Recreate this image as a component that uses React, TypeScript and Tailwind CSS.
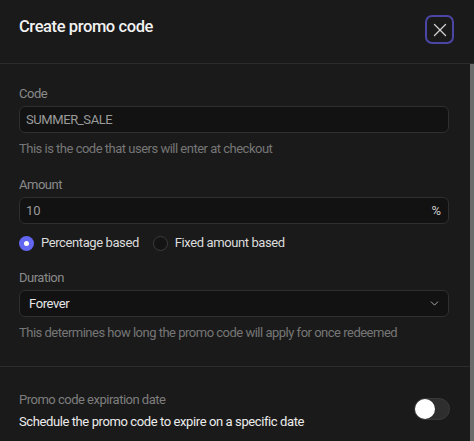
import { X, ChevronDown } from 'lucide-react'

const font = { fontFamily: 'Roboto, "Noto Sans", sans-serif' }

function Field({ label, children, help }: { label: string; children: React.ReactNode; help?: string }) {
  return (
    <div className="flex flex-col">
      <label className="text-[13px] leading-[18px] tracking-[-0.5px] text-[#8a8a8a]">{label}</label>
      <div className="mt-[3px]">{children}</div>
      {help && <p className="mt-[8px] whitespace-nowrap text-[13px] leading-[16px] tracking-[-0.5px] text-[#767676]">{help}</p>}
    </div>
  )
}

function Radio({ checked, label }: { checked?: boolean; label: string }) {
  return (
    <label className="flex items-center gap-[7px]">
      {checked ? (
        <span className="flex h-[15px] w-[15px] items-center justify-center rounded-full bg-[#6366f1]">
          <span className="h-[5px] w-[5px] rounded-full bg-white" />
        </span>
      ) : (
        <span className="h-[15px] w-[15px] rounded-full border border-[#3c3c3c] bg-[#141414]" />
      )}
      <span className="text-[13px] leading-[18px] tracking-[-0.4px] text-[#dcdcdc]">{label}</span>
    </label>
  )
}

export default function App() {
  return (
    <div style={font} className="flex h-[441px] w-[474px] flex-col overflow-hidden bg-[#1a1a1a]">
      {/* Header */}
      <div className="flex h-[64px] shrink-0 items-start justify-between border-b border-[#2c2c2c] pl-[19px] pr-[20px]">
        <h2 className="mt-[16px] text-[16.5px] font-medium leading-[22px] tracking-[-0.4px] text-[#f2f2f2]">Create promo code</h2>
        <button className="mt-[15px] flex h-[29px] w-[29px] items-center justify-center rounded-[7px] border-2 border-[#4b46a6] bg-[#1a1a1a]">
          <X className="h-[22px] w-[22px] text-[#d0d0d0]" strokeWidth={1.4} />
        </button>
      </div>

      <div className="flex min-h-0 flex-1">
        <div className="flex-1">
          {/* Main section */}
          <div className="flex flex-col border-b border-[#2c2c2c] pb-[25px] pl-[19px] pr-[21px] pt-[21px]">
            <Field label="Code" help="This is the code that users will enter at checkout">
              <div className="flex h-[27px] items-center rounded-[6px] border border-[#2f2f2f] bg-[#121212] px-[6px]">
                <span className="text-[13px] tracking-[-0.4px] text-[#9a9a9a]">SUMMER_SALE</span>
              </div>
            </Field>

            <div className="mt-[19px]">
              <Field label="Amount">
                <div className="flex h-[27px] items-center justify-between rounded-[6px] border border-[#2f2f2f] bg-[#121212] pl-[6px] pr-[7px]">
                  <span className="text-[13px] text-[#9a9a9a]">10</span>
                  <span className="text-[13px] text-[#c8c8c8]">%</span>
                </div>
              </Field>
            </div>

            <div className="mt-[10px] flex items-center gap-[14px]">
              <Radio checked label="Percentage based" />
              <Radio label="Fixed amount based" />
            </div>

            <div className="mt-[17px]">
              <Field label="Duration" help="This determines how long the promo code will apply for once redeemed">
                <div className="flex h-[27px] items-center justify-between rounded-[6px] border border-[#2f2f2f] bg-[#121212] pl-[9px] pr-[7px]">
                  <span className="text-[13px] tracking-[-0.4px] text-[#e6e6e6]">Forever</span>
                  <ChevronDown className="h-[13px] w-[13px] text-[#bdbdbd]" strokeWidth={1.6} />
                </div>
              </Field>
            </div>
          </div>

          {/* Expiration */}
          <div className="flex items-start justify-between pl-[19px] pr-[20px] pt-[24px]">
            <div className="flex flex-col">
              <span className="text-[13px] leading-[18px] tracking-[-0.5px] text-[#7e7e7e]">Promo code expiration date</span>
              <span className="mt-[4px] whitespace-nowrap text-[13px] leading-[18px] tracking-[-0.4px] text-[#ececec]">
                Schedule the promo code to expire on a specific date
              </span>
            </div>
            <button className="mt-[7px] flex h-[22px] w-[36px] items-center rounded-full border border-[#3a3a3a] bg-[#2e2e2e] p-0">
              <span className="h-[20px] w-[20px] rounded-full bg-white" />
            </button>
          </div>
        </div>
        {/* Scrollbar */}
        <div className="w-[4px] shrink-0 bg-[#6b6b6b]" />
      </div>
    </div>
  )
}
